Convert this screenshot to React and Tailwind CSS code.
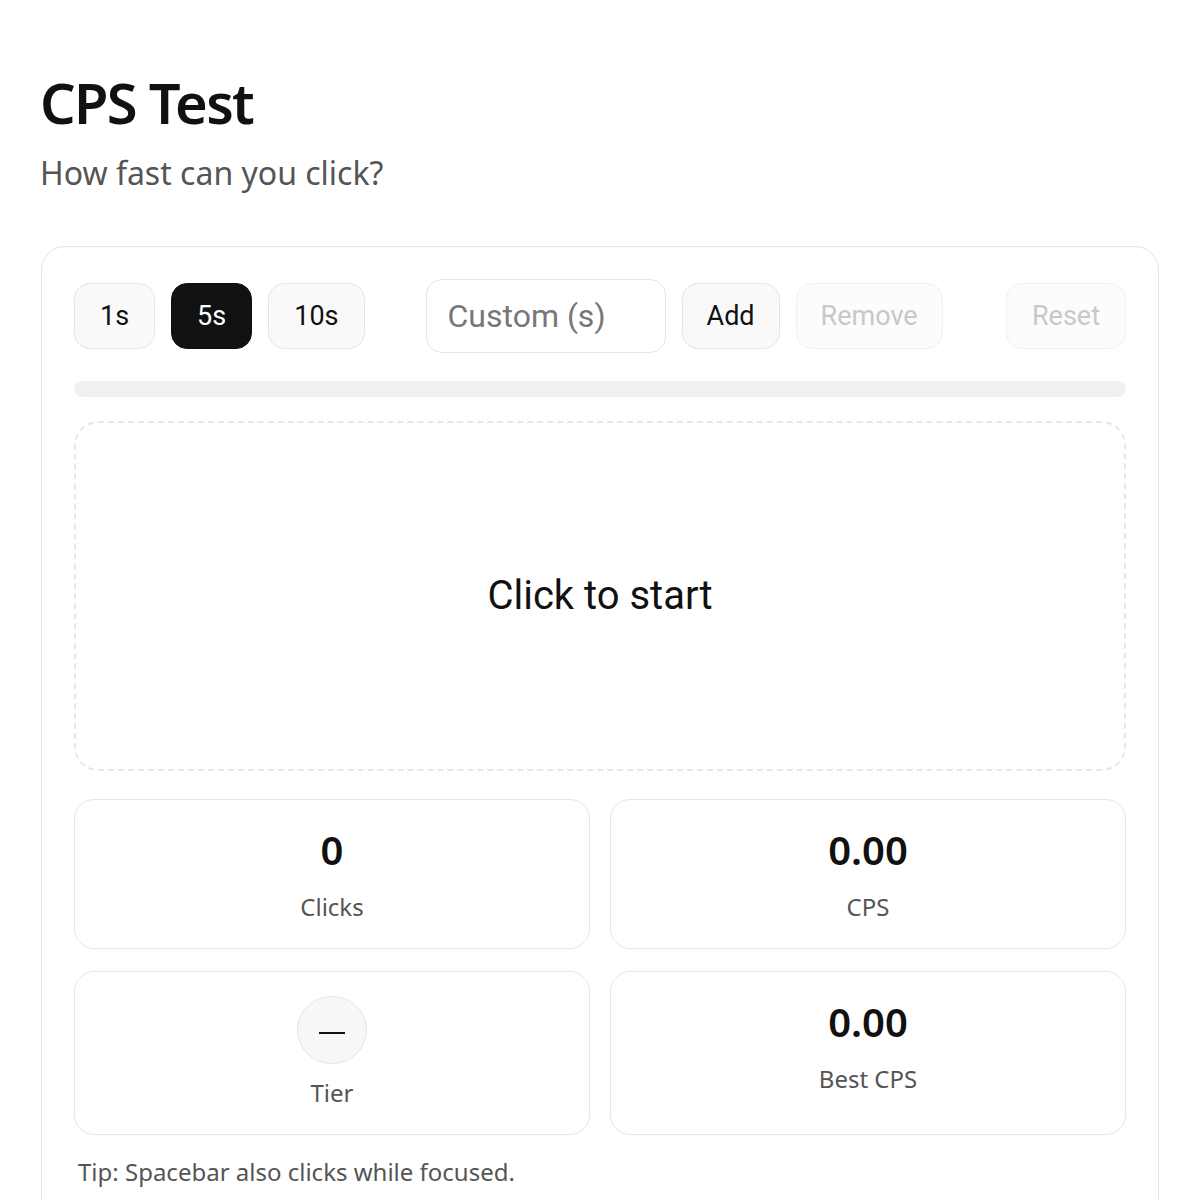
import React from "react";

function Stat({ value, label }) {
  return (
    <div className="flex flex-col items-center rounded-[20px] border border-[#e5e5e5] pt-[26px] pb-[24px]">
      <div className="text-[40px] leading-[48px] font-semibold text-[#111]">{value}</div>
      <div className="mt-[16px] text-[24px] leading-[34px] text-[#555]">{label}</div>
    </div>
  );
}

export default function App() {
  const btn =
    "h-[66px] rounded-[16px] border border-[#e5e5e5] bg-[#f9f9f9] px-[25px] text-[27px] text-[#111]";
  const dis =
    "h-[66px] rounded-[16px] border border-[#f0f0f0] bg-[#fcfcfc] px-[25px] text-[27px] text-[#c8c8c8]";
  return (
    <div className="min-h-[1200px] bg-white px-[41px] pt-[64px]" style={{ fontFamily: '"Noto Sans", "Open Sans", sans-serif' }}>
      <h1 className="-ml-px text-[56px] leading-[76px] font-semibold tracking-[-0.03em] text-[#111]">CPS Test</h1>
      <p className="-ml-px mt-[11px] text-[32px] leading-[44px] text-[#555]">How fast can you click?</p>
      <div className="mt-[51px] rounded-[24px] border border-[#e5e5e5] p-[32px] pb-[40px]">
        <div className="flex items-center" style={{ fontFamily: 'Roboto, sans-serif' }}>
          <div className="flex items-center gap-[16px]">
            <button className={btn}>1s</button>
            <button className="h-[66px] rounded-[16px] border border-[#111] bg-[#111] px-[25px] text-[27px] text-white">5s</button>
            <button className={btn}>10s</button>
          </div>
          <input
            className="ml-[61px] h-[74px] w-[240px] rounded-[16px] border border-[#e5e5e5] bg-white px-[21px] text-[32px] text-[#111] placeholder:text-[#777] outline-none"
            placeholder="Custom (s)"
          />
          <button className="ml-[16px] h-[66px] rounded-[16px] border border-[#e5e5e5] bg-[#f9f9f9] px-[24px] text-[27px] text-[#111]">Add</button>
          <button className="ml-[16px] h-[66px] rounded-[16px] border border-[#f0f0f0] bg-[#fcfcfc] px-[24px] text-[27px] text-[#c8c8c8]">Remove</button>
          <button className={dis + " ml-auto"}>Reset</button>
        </div>
        <div className="mt-[28px] h-[16px] rounded-full bg-[#f0f0f0]" />
        <div
          className="mt-[24px] flex h-[350px] items-center justify-center rounded-[24px] border-2 border-dashed border-[#e8e8e8] text-[40px] text-[#111]"
          style={{ fontFamily: 'Roboto, sans-serif' }}
        >
          Click to start
        </div>
        <div className="mt-[28px] grid grid-cols-2 gap-x-[20px] gap-y-[22px]">
          <Stat value="0" label="Clicks" />
          <Stat value="0.00" label="CPS" />
          <div className="flex flex-col items-center rounded-[20px] border border-[#e5e5e5] pt-[24px] pb-[24px]">
            <div className="flex h-[68px] w-[70px] items-center justify-center rounded-full border border-[#e5e5e5] bg-[#f7f7f7]">
              <div className="mt-[6px] h-[2px] w-[26px] bg-[#111]" />
            </div>
            <div className="mt-[12px] text-[24px] leading-[34px] text-[#555]">Tier</div>
          </div>
          <Stat value="0.00" label="Best CPS" />
        </div>
        <p className="mt-[20px] pl-[4px] text-[24px] leading-[34px] text-[#555]">Tip: Spacebar also clicks while focused.</p>
      </div>
    </div>
  );
}
